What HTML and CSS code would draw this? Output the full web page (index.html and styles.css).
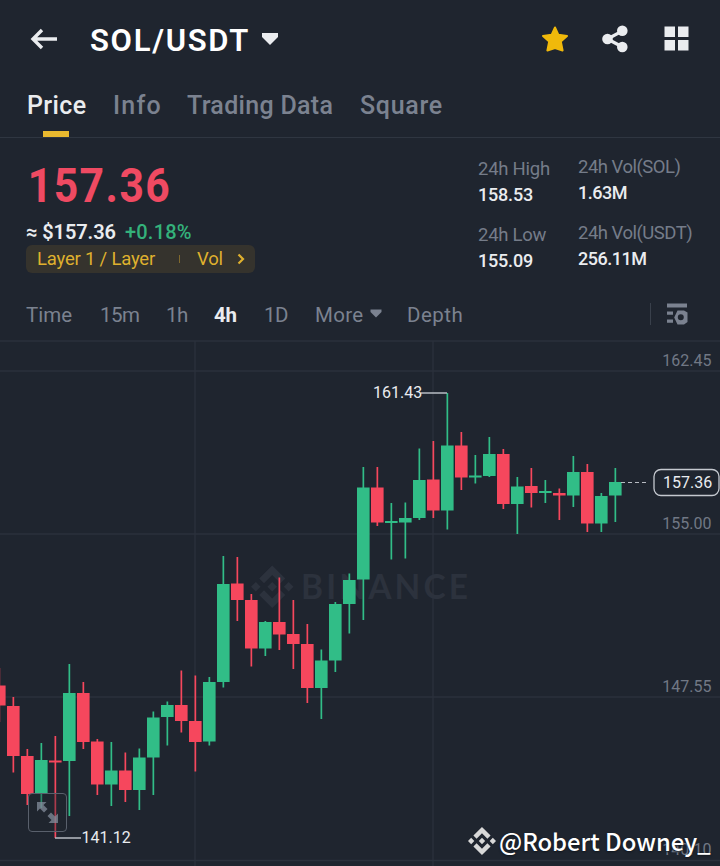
FILE: index.html
```html
<!DOCTYPE html>
<html lang="en">

<head>
    <meta charset="UTF-8">
    <meta name="viewport" content="width=device-width, initial-scale=1.0">
    <title>SOL/USDT</title>
    <link rel="stylesheet" href="styles.css">
</head>

<body>
    <header class="header">
        <svg class="back" width="28" height="22" viewBox="0 0 28 22">
            <path d="M12 2L3 11L12 20M3.500 11H27" />
        </svg>
        <h1 class="pair">SOL/USDT</h1>
        <svg class="pair-arrow" width="18" height="14" viewBox="0 0 18 14">
            <path d="M1 1H17V5L9 13L1 5Z" />
        </svg>
        <div class="actions">
            <svg class="star" width="28" height="28" viewBox="0 0 28 28">
                <path d="M14 2.500L17.400 9.800L26 11L19.800 16.500L21.600 25.500L14 23L6.400 25.500L8.200 16.500L2 11L10.600 9.800Z" />
            </svg>
            <svg class="share" width="28" height="28" viewBox="0 0 28 28">
                <path d="M6.500 14L21.500 5.800M6.500 14L21.500 22" />
                <circle cx="6.500" cy="14" r="5.300" />
                <circle cx="21.300" cy="5.800" r="5.300" />
                <circle cx="21.300" cy="22" r="5.300" />
            </svg>
            <svg class="apps" width="25" height="25" viewBox="0 0 25 25">
                <path d="M0.500 0.500h10.500v10.500h-10.500zM14 0.500h10.500v10.500h-10.500zM0.500 14h10.500v10.500h-10.500zM14 14h10.500v10.500h-10.500z" />
            </svg>
        </div>
    </header>
    <nav class="tabs">
        <a class="tab tab-price active">Price</a>
        <a class="tab tab-info">Info</a>
        <a class="tab tab-data">Trading Data</a>
        <a class="tab tab-square">Square</a>
    </nav>
    <section class="summary">
        <div class="quote">
            <div class="last-price">157.36</div>
            <div class="sub-price">
                <span class="usd">≈ $157.36</span>
                <span class="change">+0.18%</span>
            </div>
            <div class="tags">
                <span class="tag-layer">Layer 1 / Layer</span>
                <i class="tag-line"></i>
                <span class="tag-vol">Vol</span>
                <svg width="8" height="12" viewBox="0 0 8 12">
                    <path d="M1.500 1.500L6 6L1.500 10.500" />
                </svg>
            </div>
        </div>
        <dl class="stats">
            <dt>24h High</dt>
            <dd>158.53</dd>
            <dt>24h Low</dt>
            <dd>155.09</dd>
        </dl>
        <dl class="stats stats-vol">
            <dt>24h Vol(SOL)</dt>
            <dd>1.63M</dd>
            <dt>24h Vol(USDT)</dt>
            <dd>256.11M</dd>
        </dl>
    </section>
    <nav class="periods">
        <a class="p-time">Time</a>
        <a class="p-15m">15m</a>
        <a class="p-1h">1h</a>
        <a class="p-4h active">4h</a>
        <a class="p-1d">1D</a>
        <a class="p-more">More
            <svg width="12" height="9" viewBox="0 0 12 9">
                <path d="M0.500 0.500H11.500V3L6 8.500L0.500 3Z" />
            </svg>
        </a>
        <a class="p-depth">Depth</a>
        <div class="setting">
            <svg width="22" height="22" viewBox="0 0 22 22">
                <path d="M1 0.500h20v4H1zM1 8.500h6v3.200H1zM1 16.500h6v3.200H1z" />
                <path fill-rule="evenodd" d="M11.500 7.500h6.500l3.500 2v9.500l-3.500 2.500h-6.500l-3.300-7zM14.800 11.300a3 3 0 1 0 0 6a3 3 0 1 0 0-6z" />
            </svg>
        </div>
    </nav>
    <main class="chart-box">
        <svg class="chart" width="720" height="526" viewBox="0 340 720 526">
            <defs>
                <path id="logo" d="M16.624 13.920l2.718 2.715-7.353 7.353-7.353-7.352 2.717-2.716 4.636 4.659 4.636-4.659zm4.637-4.637L24 12l-2.715 2.716L18.568 12l2.693-2.717zm-9.272.001l2.716 2.692-2.716 2.717L9.272 12l2.717-2.716zm-9.272-.001L5.409 12l-2.692 2.692L0 12l2.717-2.717zM11.989.012l7.353 7.329-2.718 2.715-4.635-4.635-4.636 4.659-2.717-2.715z" />
            </defs>
            <path class="grid" d="M0 341H720M0 371H720M0 534H720M0 697H720M0 860.500H720M195 341V866M433 341V866" />
            <g class="watermark">
                <use href="#logo" transform="translate(251 565.500) scale(1.770)" />
                <text x="301" y="599" textLength="167">BINANCE</text>
            </g>
            <g class="axis">
                <text x="711.500" y="366">162.45</text>
                <text x="711.500" y="529">155.00</text>
                <text x="711.500" y="692">147.55</text>
                <text x="711.500" y="855">140.10</text>
            </g>
            <g id="candles"></g>
            <path class="leader" d="M421 393H447M55 838H81" />
            <text class="mark" x="373" y="398">161.43</text>
            <text class="mark" x="81.500" y="843">141.12</text>
            <path class="dash" d="M621 482.500H647" />
            <rect class="now-box" x="654" y="469.500" width="65" height="26" rx="7" />
            <text class="mark" x="663" y="488">157.36</text>
            <g class="expand">
                <rect x="28.500" y="793.500" width="38" height="38" rx="3.500" />
                <path d="M37 802h9.500l-3 3 4 4-3.500 3.500-4-4-3 3zM58 823h-9.500l3-3-4-4 3.500-3.500 4 4 3-3z" />
            </g>
        </svg>
        <div class="author">
            <svg width="28" height="28" viewBox="0 0 24 24">
                <use href="#logo" />
            </svg>
            <span>@Robert Downey_</span>
        </div>
    </main>
    <script>
        // [high, low, body top, body bottom, up]
        const list = [
            [668, 722, 685.5, 705.5, 0], [697, 772.5, 706, 756, 0],
            [749, 805, 756, 794, 0], [743, 808, 760, 794, 1],
            [736, 838, 760.5, 762.5, 0], [664, 816, 693, 761, 1],
            [682, 749, 693, 742, 0], [739, 795, 741.5, 784.5, 0],
            [742, 806, 770.5, 784.5, 1], [752.5, 802, 770.5, 790, 0],
            [748.5, 810, 757.5, 790, 1], [711.5, 795, 717.5, 757.5, 1],
            [701.5, 745.5, 705, 717, 1], [670.5, 732.5, 705, 721, 0],
            [675.5, 771.5, 721, 742, 0], [677, 745.5, 682, 741.5, 1],
            [556, 687.5, 584, 682, 1], [557, 621, 583.5, 600, 0],
            [594, 666.5, 600, 648.5, 0], [621, 656, 622, 648.5, 1],
            [577.5, 650, 622, 634.5, 0], [600, 669, 634, 644, 0],
            [624, 703, 644, 688, 0], [649.5, 719, 660.5, 688, 1],
            [602, 672, 604, 660.5, 1], [573.5, 633.5, 580, 604, 1],
            [467, 620, 487.5, 579.5, 1], [467, 526, 487.5, 522.5, 0],
            [503, 559.5, 521, 523, 1], [502.5, 558.5, 518, 522.5, 1],
            [448.5, 520, 480, 518, 1], [441, 518, 479.5, 510.5, 0],
            [393, 529.5, 445.5, 510.5, 1], [432, 490, 445.5, 477.5, 0],
            [455, 483.5, 475.5, 477.5, 1], [437, 477, 454, 476, 1],
            [449, 509, 454, 504, 0], [477, 534, 486.5, 504, 1],
            [468, 507.5, 486, 493, 0], [480, 503, 491, 493, 1],
            [488.5, 520, 493, 495.5, 0], [456, 507, 472, 495.5, 1],
            [464, 532, 472, 523.5, 0], [493, 532, 496, 523.5, 1],
            [468, 522, 482, 495.5, 1]
        ];
        const step = 14;
        const bodyWidth = 12.6;
        let html = '';
        list.forEach(([high, low, top, bottom, up], i) => {
            const x = i * step - 0.7;
            html += `<g class="${up ? 'up' : 'down'}">
                <rect x="${x - 0.8}" y="${high}" width="1.7" height="${low - high}" />
                <rect x="${x - bodyWidth / 2}" y="${top}" width="${bodyWidth}" height="${bottom - top}" />
            </g>`;
        });
        document.querySelector('#candles').innerHTML = html;
    </script>
</body>

</html>
```
FILE: styles.css
```css
* {
    margin: 0;
    padding: 0;
    box-sizing: border-box;
}

body {
    width: 720px;
    height: 866px;
    overflow: hidden;
    background-color: #1f252f;
    color: #eaecef;
    font-family: Roboto, "Liberation Sans", sans-serif;
    white-space: nowrap;
}

svg {
    display: block;
    flex-shrink: 0;
}

/* header */
.header {
    display: flex;
    align-items: center;
    height: 77px;
    padding: 0 31px 0 30px;
}
.back {
    fill: none;
    stroke: #eaecef;
    stroke-width: 3.4;
}
.pair {
    margin-left: 32px;
    padding-top: 4px;
    width: 158px;
    font-size: 31px;
    font-weight: 600;
    letter-spacing: 1.7px;
    color: #fff;
}
.pair-arrow {
    margin-left: 13px;
    fill: #eaecef;
}
.actions {
    display: flex;
    align-items: center;
    margin-left: auto;
}
.star {
    fill: #f0b90b;
    stroke: #f0b90b;
    stroke-width: 2;
    stroke-linejoin: round;
}
.share {
    margin-left: 32px;
    fill: #eaecef;
}
.share path {
    stroke: #eaecef;
    stroke-width: 3.2;
}
.apps {
    margin-left: 35px;
    fill: #eaecef;
}

/* tabs */
.tabs {
    display: flex;
    height: 61px;
    padding-left: 27px;
    border-bottom: 1px solid #2f3641;
    font-size: 25px;
    font-weight: 500;
    line-height: 58px;
    color: #7b8290;
}
.tab {
    position: relative;
}
.tab.active {
    color: #eaecef;
}
.tab.active::after {
    content: "";
    position: absolute;
    left: 16px;
    bottom: 0;
    width: 26px;
    height: 6px;
    background-color: #e9b92f;
}
.tab-price {
    width: 86px;
    letter-spacing: 0.4px;
}
.tab-info {
    width: 74px;
    letter-spacing: 1.2px;
}
.tab-data {
    width: 173px;
    letter-spacing: 0.3px;
}
.tab-square {
    letter-spacing: 0.7px;
}

/* summary */
.summary {
    display: flex;
    height: 150px;
    padding: 16px 0 0 26px;
}
.quote {
    width: 452px;
}
.last-price {
    height: 63px;
    padding-left: 2px;
    font-size: 49px;
    font-weight: 700;
    line-height: 64px;
    letter-spacing: 1.7px;
    color: #ef4a62;
    transform: scaleX(0.87);
    transform-origin: left;
}
.sub-price {
    display: flex;
    height: 28px;
    font-size: 20px;
    line-height: 31px;
}
.usd {
    width: 99px;
    font-weight: 600;
    letter-spacing: -0.1px;
}
.change {
    font-weight: 500;
    letter-spacing: 0.2px;
    color: #34b27b;
}
.tags {
    display: flex;
    align-items: center;
    width: 229px;
    height: 28px;
    padding-left: 11px;
    border-radius: 6px;
    background-color: #35332d;
    font-size: 18.5px;
    color: #dfb02e;
}
.tag-layer {
    width: 142px;
    letter-spacing: -0.2px;
}
.tag-line {
    width: 1px;
    height: 8px;
    background-color: #80692d;
}
.tag-vol {
    margin-left: 17px;
    width: 40px;
    letter-spacing: -0.2px;
}
.tags path {
    fill: none;
    stroke: #dfb02e;
    stroke-width: 2.2;
}
.stats {
    width: 100px;
    padding-top: 2px;
    font-size: 18.5px;
    line-height: 26px;
}
.stats dt {
    color: #757c89;
    letter-spacing: -0.25px;
}
.stats dd {
    margin-bottom: 14px;
    font-size: 18px;
    font-weight: 500;
    letter-spacing: -0.2px;
}
.stats-vol {
    padding-top: 0;
}
.stats-vol dt {
    letter-spacing: -0.5px;
}
.stats-vol dd {
    letter-spacing: -0.5px;
}

/* periods */
.periods {
    display: flex;
    align-items: center;
    height: 52px;
    padding: 2px 32px 0 26px;
    font-size: 20.5px;
    color: #7b8290;
}
.periods .active {
    font-weight: 700;
    color: #eaecef;
}
.p-time {
    width: 74px;
}
.p-15m {
    width: 66px;
    letter-spacing: -0.5px;
}
.p-1h {
    width: 48px;
    letter-spacing: -0.4px;
}
.p-4h {
    width: 50px;
    letter-spacing: -0.3px;
}
.p-1d {
    width: 51px;
    letter-spacing: -0.5px;
}
.p-more {
    display: flex;
    align-items: center;
    gap: 7px;
    width: 92px;
    letter-spacing: 0.3px;
}
.p-depth {
    letter-spacing: 0.5px;
}
.periods svg {
    fill: #7b8290;
}
.p-more svg {
    margin-top: -4px;
}
.setting {
    display: flex;
    align-items: center;
    margin-left: auto;
    height: 22px;
    padding-left: 15px;
    margin-top: -2px;
    border-left: 1px solid #39404b;
}

/* chart */
.chart-box {
    position: relative;
}
.chart text {
    font-size: 16px;
}
.grid {
    fill: none;
    stroke: #2b313c;
    stroke-width: 1.3;
}
.watermark {
    fill: #2c323d;
}
.chart .watermark text {
    font-family: Lato, sans-serif;
    font-size: 33.5px;
    font-weight: 700;
}
.axis {
    fill: #717885;
    text-anchor: end;
}
.up {
    fill: #31bd87;
}
.down {
    fill: #f6475d;
}
.leader {
    fill: none;
    stroke: #b8bcc3;
    stroke-width: 1.3;
}
.mark {
    fill: #eaecef;
}
.dash {
    stroke: #b8bcc3;
    stroke-dasharray: 4 3;
}
.now-box {
    fill: #1f252f;
    stroke: #c5c9d0;
    stroke-width: 1.3;
}
.expand {
    fill: rgba(132, 142, 156, 0.75);
}
.expand rect {
    fill: rgba(31, 37, 47, 0.35);
    stroke: #59606c;
}
.author {
    position: absolute;
    left: 468px;
    bottom: 7px;
    display: flex;
    align-items: center;
    gap: 3px;
    font-family: "Noto Sans CJK SC", sans-serif;
    font-size: 23.8px;
    font-weight: 500;
    line-height: 36px;
    color: #fff;
    text-shadow: 0 1px 2px #11161d;
}
.author svg {
    fill: #d8d8d8;
}
```
